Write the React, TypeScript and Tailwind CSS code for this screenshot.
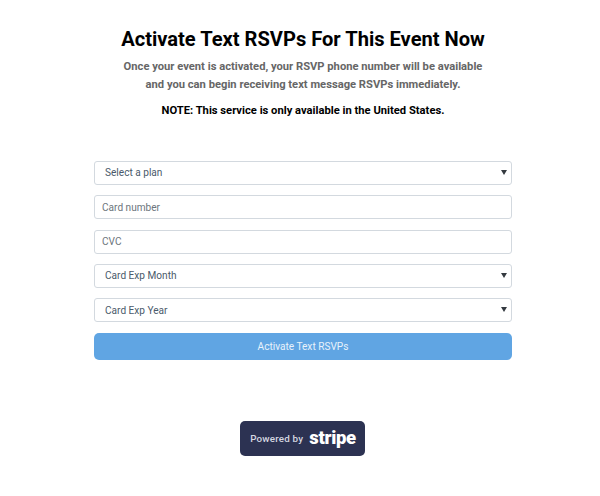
const selectClass =
  'block w-full h-6 appearance-none bg-white border border-[#d3d9df] rounded-[3px] pl-[10px] pr-6 text-[10.1px] text-[#4a5a6b] outline-none';
const inputClass =
  'block w-full h-6 bg-white border border-[#d3d9df] rounded-[3px] px-[7px] text-[10.1px] text-[#495057] placeholder:text-[#6c757d] outline-none';

function SelectField({ label }: { label: string }) {
  return (
    <div className="relative">
      <select className={selectClass} defaultValue="">
        <option value="">{label}</option>
      </select>
      <span className="absolute right-[5px] top-[9px] w-0 h-0 border-x-[3px] border-x-transparent border-t-[5px] border-t-[#343a40]" />
    </div>
  );
}

export default function App() {
  return (
    <div className="w-[600px] h-[496px] bg-white font-['Roboto',sans-serif] flex flex-col items-center overflow-hidden pl-[6px]">
      <h1 className="mt-[25px] text-[20.1px] leading-[28px] font-bold text-black">
        Activate Text RSVPs For This Event Now
      </h1>
      <p className="mt-[5px] text-[11.2px] leading-[18px] font-bold text-[#666666] text-center">
        Once your event is activated, your RSVP phone number will be available
        <br />
        and you can begin receiving text message RSVPs immediately.
      </p>
      <p className="mt-[8px] text-[11.2px] leading-[18px] font-bold text-black">
        NOTE: This service is only available in the United States.
      </p>

      <form className="mt-[41px] w-[418px] flex flex-col gap-[10.3px]">
        <SelectField label="Select a plan" />
        <input className={inputClass} placeholder="Card number" />
        <input className={inputClass} placeholder="CVC" />
        <SelectField label="Card Exp Month" />
        <SelectField label="Card Exp Year" />
        <button
          type="button"
          className="mt-[1px] h-[27px] w-full bg-[#60a5e3] rounded-[5px] text-[10.1px] font-normal text-[#e8f2fb]"
        >
          Activate Text RSVPs
        </button>
      </form>

      <div className="mt-[61px] -ml-[1px] w-[125px] h-[35px] bg-[#2c3252] rounded-[5px] flex items-center justify-center gap-[6px]">
        <span className="ml-[1px] text-[9.8px] font-medium text-[#d5d7e0] tracking-[0.2px]">Powered by</span>
        <span className="text-[18.5px] leading-none font-black text-white tracking-[-0.3px] -mt-[2px]">
          stripe
        </span>
      </div>
    </div>
  );
}
